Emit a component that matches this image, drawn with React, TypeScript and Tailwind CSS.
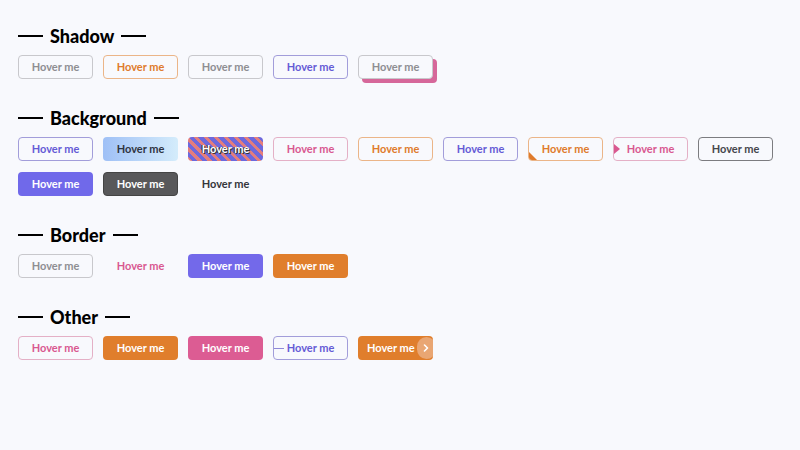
import React from 'react'

const base =
    "relative w-[75px] h-[24px] rounded-[4px] text-[11px] font-bold flex items-center justify-center overflow-hidden"

function Heading({ title }: { title: string }) {
    return (
        <div className="flex items-center gap-[7px] h-[20px] mb-[9px]">
            <span className="w-[25px] h-[2.5px] bg-black" />
            <h2 className="text-[18px] font-black text-black leading-none">{title}</h2>
            <span className="w-[25px] h-[2.5px] bg-black" />
        </div>
    )
}

export default function App() {
    return (
        <div className="min-h-screen w-full bg-[#f8f9fd] px-[18px] pt-[26px] font-['Lato',sans-serif]">
            {/* Shadow */}
            <section className="mb-[29px]">
                <Heading title="Shadow" />
                <div className="flex flex-wrap gap-[10px]">
                    <button className={`${base} border border-[#c8c8cc] text-[#8e8e92]`}>Hover me</button>
                    <button className={`${base} border border-[#ebb588] text-[#df7b2c]`}>Hover me</button>
                    <button className={`${base} border border-[#c8c8cc] text-[#8e8e92]`}>Hover me</button>
                    <button className={`${base} border border-[#a29dda] text-[#655bd6]`}>Hover me</button>
                    <button className="w-[75px] h-[24px] rounded-[4px] text-[11px] font-bold flex items-center justify-center border border-[#c8c8cc] bg-[#f8f9fd] text-[#8e8e92] shadow-[4px_4px_0_#d6679a]">Hover me</button>
                </div>
            </section>

            {/* Background */}
            <section className="mb-[29px]">
                <Heading title="Background" />
                <div className="flex flex-wrap gap-x-[10px] gap-y-[11px] w-[760px]">
                    <button className={`${base} border border-[#a29dda] text-[#655bd6]`}>Hover me</button>
                    <button className={`${base} bg-[linear-gradient(90deg,#9fc0f6,#d4ecfb)] text-[#2f3442]`}>Hover me</button>
                    <button className={`${base} bg-[repeating-linear-gradient(45deg,#e27d7d_0_3px,#6e68dc_3px_7px)] text-white [text-shadow:1px_1px_0_#333,-1px_0_0_#333]`}>Hover me</button>
                    <button className={`${base} border border-[#e4b0c6] text-[#d95890]`}>Hover me</button>
                    <button className={`${base} border border-[#ebb588] text-[#df7b2c]`}>Hover me</button>
                    <button className={`${base} border border-[#a29dda] text-[#655bd6]`}>Hover me</button>
                    <button className={`${base} border border-[#ebb588] text-[#df7b2c]`}>
                        <span className="absolute left-0 bottom-0 w-[8px] h-[8px] bg-[#df7b2c] [clip-path:polygon(0_0,0_100%,100%_100%)]" />
                        Hover me
                    </button>
                    <button className={`${base} border border-[#e4b0c6] text-[#d95890]`}>
                        <span className="absolute left-0 top-[6px] w-[6px] h-[10px] bg-[#d95890] [clip-path:polygon(0_0,100%_50%,0_100%)]" />
                        Hover me
                    </button>
                    <button className={`${base} border border-[#7c7c80] text-[#45464c]`}>Hover me</button>
                    <button className={`${base} bg-[#7069ea] text-white`}>Hover me</button>
                    <button className={`${base} bg-[#58585a] border border-[#444] text-white`}>Hover me</button>
                    <button className={`${base} text-[#34353a]`}>Hover me</button>
                </div>
            </section>

            {/* Border */}
            <section className="mb-[29px]">
                <Heading title="Border" />
                <div className="flex flex-wrap gap-[10px]">
                    <button className={`${base} border border-[#c8c8cc] text-[#8e8e92]`}>Hover me</button>
                    <button className={`${base} text-[#d95890]`}>Hover me</button>
                    <button className={`${base} bg-[#7369ea] text-white`}>Hover me</button>
                    <button className={`${base} bg-[#e07e2c] text-white`}>Hover me</button>
                </div>
            </section>

            {/* Other */}
            <section>
                <Heading title="Other" />
                <div className="flex flex-wrap gap-[10px]">
                    <button className={`${base} border border-[#e4b0c6] text-[#d95890]`}>Hover me</button>
                    <button className={`${base} bg-[#e07e2c] text-white`}>Hover me</button>
                    <button className={`${base} bg-[#dc5c93] text-white`}>Hover me</button>
                    <button className={`${base} border border-[#a29dda] text-[#655bd6]`}>
                        <span className="absolute left-0 top-[11px] w-[10px] h-px bg-[#8f89d8]" />
                        Hover me
                    </button>
                    <button className={`${base} bg-[#e07e2c] text-white justify-start pl-[9px]`}>
                        Hover me
                        <span className="absolute right-[-3px] top-[1px] w-[19px] h-[22px] rounded-full bg-[#e9a673] flex items-center justify-center pr-[2px]">
                            <svg width="6" height="8" viewBox="0 0 6 8" fill="none">
                                <path d="M1.5 1 L4.5 4 L1.5 7" stroke="white" strokeWidth="1.6" strokeLinecap="round" strokeLinejoin="round" />
                            </svg>
                        </span>
                    </button>
                </div>
            </section>
        </div>
    )
}
